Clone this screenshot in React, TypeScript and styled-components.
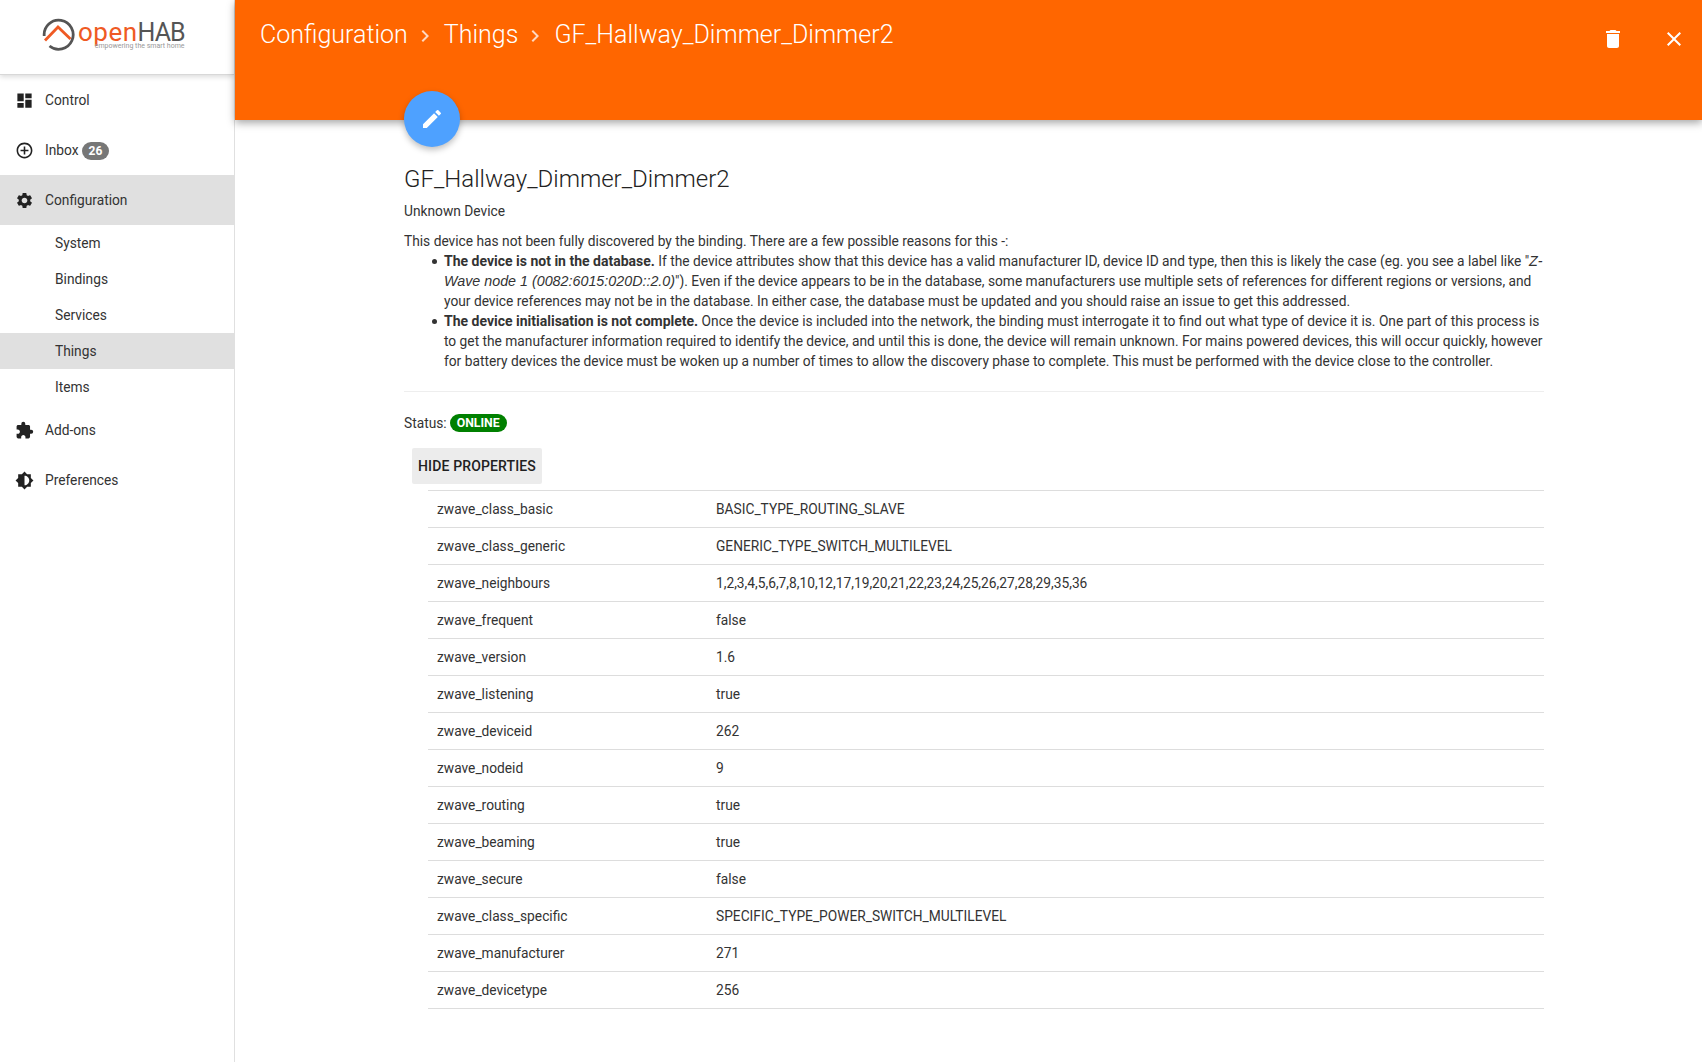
import React from "react"
import styled, { createGlobalStyle } from "styled-components"
import {
  MdDashboard,
  MdAddCircleOutline,
  MdSettings,
  MdExtension,
  MdBrightness6,
  MdEdit,
  MdDelete,
  MdClose,
  MdChevronRight,
} from "react-icons/md"

const GlobalStyle = createGlobalStyle`
  html, body {
    margin: 0;
    padding: 0;
    height: 100%;
    background: #fff;
  }
  body {
    font-family: Roboto, "Liberation Sans", sans-serif;
    font-size: 13.75px;
    line-height: 20px;
    color: #333;
  }
  * {
    box-sizing: border-box;
  }
`

const Page = styled.div`
  display: flex;
  flex-direction: row;
  width: 1702px;
  height: 1062px;
  overflow: hidden;
`
const Sidebar = styled.div`
  display: flex;
  flex-direction: column;
  width: 235px;
  flex: none;
  height: 100%;
  border-right: 1px solid #e0e0e0;
  background: #fff;
`
const LogoBox = styled.div`
  display: flex;
  align-items: center;
  gap: 3px;
  height: 75px;
  padding: 0 0 5px 42px;
  border-bottom: 1px solid #d8d8d8;
  box-shadow: 0 2px 5px rgba(0, 0, 0, 0.14);
  flex: none;
`
const LogoText = styled.div`
  display: flex;
  flex-direction: column;
  align-items: flex-end;
  padding-top: 5px;
`
const LogoName = styled.div`
  height: 19px;
  font-size: 26px;
  line-height: 19px;
  letter-spacing: 0.5px;
  color: #ef5a24;
  span {
    color: #555;
    font-size: 25px;
    letter-spacing: -1px;
  }
`
const LogoTag = styled.div`
  font-size: 7px;
  line-height: 9px;
  color: #999;
  white-space: nowrap;
`
const NavItem = styled.div<{ active?: boolean }>`
  display: flex;
  align-items: center;
  height: 50px;
  padding-left: 15px;
  color: #333;
  background: ${p => (p.active ? "#e0e0e0" : "transparent")};
  svg {
    width: 19px;
    height: 19px;
    color: #222;
    flex: none;
  }
`
const NavLabel = styled.span`
  margin-left: 11px;
`
const Badge = styled.span`
  display: inline-block;
  margin: 1px 0 0 3px;
  height: 18px;
  line-height: 18px;
  padding: 0 7px;
  border-radius: 9px;
  background: #777;
  color: #fff;
  font-size: 12px;
  font-weight: 700;
`
const SubItem = styled.div<{ active?: boolean }>`
  display: flex;
  align-items: center;
  height: 36px;
  padding-left: 55px;
  color: #333;
  background: ${p => (p.active ? "#e0e0e0" : "transparent")};
`
const Main = styled.div`
  display: flex;
  flex-direction: column;
  flex: 1;
  min-width: 0;
  position: relative;
`
const Header = styled.div`
  display: flex;
  flex-direction: row;
  justify-content: space-between;
  align-items: flex-start;
  height: 120px;
  flex: none;
  padding: 18px 16px 0 25px;
  background: #ff6600;
  color: #fff;
  box-shadow: 0 3px 8px rgba(0, 0, 0, 0.35);
`
const Crumbs = styled.div`
  display: flex;
  align-items: center;
  height: 34px;
  font-size: 25px;
  font-weight: 300;
  line-height: 34px;
`
const CrumbArrow = styled(MdChevronRight)`
  width: 24px;
  height: 24px;
  margin: 2px 7px 0 5px;
  opacity: 0.75;
`
const HeaderActions = styled.div`
  display: flex;
  align-items: center;
  gap: 37px;
  padding-top: 9px;
  svg {
    width: 24px;
    height: 24px;
    color: #fff;
  }
`
const EditButton = styled.div`
  position: absolute;
  left: 169px;
  top: 91px;
  display: flex;
  align-items: center;
  justify-content: center;
  width: 56px;
  height: 56px;
  border-radius: 50%;
  background: #4ea1ff;
  color: #fff;
  box-shadow: 0 3px 6px rgba(0, 0, 0, 0.25);
  svg {
    width: 24px;
    height: 24px;
  }
`
const Content = styled.div`
  display: flex;
  flex-direction: column;
  width: 1140px;
  margin-left: 169px;
  padding-top: 42px;
`
const Title = styled.h2`
  margin: 0;
  font-size: 24px;
  line-height: 34px;
  font-weight: 300;
  color: #222;
`
const Subtitle = styled.div`
  margin-top: 5px;
`
const Description = styled.div`
  margin-top: 10px;
  padding-bottom: 20px;
  border-bottom: 1px solid #eee;
  p {
    margin: 0;
  }
  ul {
    margin: 0;
    padding-left: 40px;
    list-style: none;
  }
  li {
    position: relative;
  }
  li::before {
    content: "";
    position: absolute;
    left: -12px;
    top: 8px;
    width: 5px;
    height: 5px;
    border-radius: 50%;
    background: #333;
  }
  b {
    font-size: 14px;
    line-height: 0;
  }
  i {
    font-family: "Liberation Sans", sans-serif;
    font-size: 14.3px;
    line-height: 0;
  }
`
const StatusRow = styled.div`
  display: flex;
  align-items: center;
  margin-top: 21px;
  height: 20px;
`
const StatusPill = styled.span`
  margin-left: 3px;
  height: 18px;
  line-height: 18px;
  padding: 0 7px;
  border-radius: 9px;
  background: #008000;
  color: #fff;
  font-size: 12.3px;
  font-weight: 700;
`
const ToggleButton = styled.div`
  align-self: flex-start;
  margin: 15px 0 0 8px;
  display: flex;
  align-items: center;
  height: 36px;
  padding: 0 6px;
  border-radius: 2px;
  background: #ececec;
  color: #212121;
  font-size: 14px;
  letter-spacing: 0.14px;
  font-weight: 500;
`
const PropertyTable = styled.div`
  display: flex;
  flex-direction: column;
  margin: 6px 0 0 24px;
  border-top: 1px solid #ddd;
`
const PropertyRow = styled.div`
  display: grid;
  grid-template-columns: 279px 1fr;
  align-items: center;
  height: 37px;
  padding-left: 9px;
  border-bottom: 1px solid #ddd;
`

const properties: [string, string][] = [
  ["zwave_class_basic", "BASIC_TYPE_ROUTING_SLAVE"],
  ["zwave_class_generic", "GENERIC_TYPE_SWITCH_MULTILEVEL"],
  ["zwave_neighbours", "1,2,3,4,5,6,7,8,10,12,17,19,20,21,22,23,24,25,26,27,28,29,35,36"],
  ["zwave_frequent", "false"],
  ["zwave_version", "1.6"],
  ["zwave_listening", "true"],
  ["zwave_deviceid", "262"],
  ["zwave_nodeid", "9"],
  ["zwave_routing", "true"],
  ["zwave_beaming", "true"],
  ["zwave_secure", "false"],
  ["zwave_class_specific", "SPECIFIC_TYPE_POWER_SWITCH_MULTILEVEL"],
  ["zwave_manufacturer", "271"],
  ["zwave_devicetype", "256"],
]

const LogoMark = () => (
  <svg width="33" height="33" viewBox="0 0 33 33" fill="none">
    <path d="M7.5 28 A14.5 14.5 0 1 0 2.2 18" stroke="#555" strokeWidth="2.8" />
    <path d="M3 22.5 L16 9 L28.5 21" stroke="#ef5a24" strokeWidth="2.8" />
  </svg>
)

const App: React.FC = () => {
  return (
    <Page>
      <GlobalStyle />
      <Sidebar>
        <LogoBox>
          <LogoMark />
          <LogoText>
            <LogoName>
              open<span>HAB</span>
            </LogoName>
            <LogoTag>empowering the smart home</LogoTag>
          </LogoText>
        </LogoBox>
        <NavItem>
          <MdDashboard />
          <NavLabel>Control</NavLabel>
        </NavItem>
        <NavItem>
          <MdAddCircleOutline />
          <NavLabel>Inbox</NavLabel>
          <Badge>26</Badge>
        </NavItem>
        <NavItem active>
          <MdSettings />
          <NavLabel>Configuration</NavLabel>
        </NavItem>
        <SubItem>System</SubItem>
        <SubItem>Bindings</SubItem>
        <SubItem>Services</SubItem>
        <SubItem active>Things</SubItem>
        <SubItem>Items</SubItem>
        <NavItem>
          <MdExtension />
          <NavLabel>Add-ons</NavLabel>
        </NavItem>
        <NavItem>
          <MdBrightness6 />
          <NavLabel>Preferences</NavLabel>
        </NavItem>
      </Sidebar>
      <Main>
        <Header>
          <Crumbs>
            Configuration
            <CrumbArrow />
            Things
            <CrumbArrow />
            GF_Hallway_Dimmer_Dimmer2
          </Crumbs>
          <HeaderActions>
            <MdDelete />
            <MdClose />
          </HeaderActions>
        </Header>
        <EditButton>
          <MdEdit />
        </EditButton>
        <Content>
          <Title>GF_Hallway_Dimmer_Dimmer2</Title>
          <Subtitle>Unknown Device</Subtitle>
          <Description>
            <p>
              This device has not been fully discovered by the binding. There are a few possible
              reasons for this -:
            </p>
            <ul>
              <li>
                <b>The device is not in the database.</b> If the device attributes show that this
                device has a valid manufacturer ID, device ID and type, then this is likely the case
                (eg. you see a label like "<i>Z-Wave node 1 (0082:6015:020D::2.0)</i>"). Even if the
                device appears to be in the database, some manufacturers use multiple sets of
                references for different regions or versions, and your device references may not be
                in the database. In either case, the database must be updated and you should raise
                an issue to get this addressed.
              </li>
              <li>
                <b>The device initialisation is not complete.</b> Once the device is included into
                the network, the binding must interrogate it to find out what type of device it is.
                One part of this process is to get the manufacturer information required to identify
                the device, and until this is done, the device will remain unknown. For mains powered
                devices, this will occur quickly, however for battery devices the device must be
                woken up a number of times to allow the discovery phase to complete. This must be
                performed with the device close to the controller.
              </li>
            </ul>
          </Description>
          <StatusRow>
            Status:<StatusPill>ONLINE</StatusPill>
          </StatusRow>
          <ToggleButton>HIDE PROPERTIES</ToggleButton>
          <PropertyTable>
            {properties.map(([name, value]) => (
              <PropertyRow key={name}>
                <span>{name}</span>
                <span>{value}</span>
              </PropertyRow>
            ))}
          </PropertyTable>
        </Content>
      </Main>
    </Page>
  )
}

export default App
